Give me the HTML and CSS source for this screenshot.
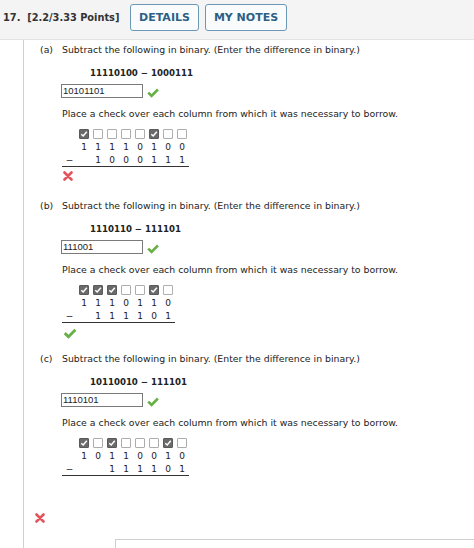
FILE: index.html
```html
<!DOCTYPE html>
<html>
<head>
<meta charset="utf-8">
<link rel="stylesheet" href="styles.css">
</head>
<body>
<div class="header">
  <span class="title">17. &nbsp;[2.2/3.33 Points]</span>
  <span class="btn btn-details">DETAILS</span>
  <span class="btn btn-notes">MY NOTES</span>
</div>
<div class="content">
  <div class="part part-a">
    <div class="qline"><span class="lbl">(a)</span><span>Subtract the following in binary. (Enter the difference in binary.)</span></div>
    <div class="expr">11110100 − 1000111</div>
    <div class="answer"><span class="input">10101101</span><svg class="ok" width="12" height="10" viewBox="0 0 12 10"><path d="M0.3 5.6 L2.2 3.7 L4.6 6.1 L10 0.6 L11.8 2.4 L4.6 9.7 Z" fill="#67b046"/></svg></div>
    <div class="place">Place a check over each column from which it was necessary to borrow.</div>
    <div class="sub cols8">
      <span></span>
      <span class="cb on"></span><span class="cb"></span><span class="cb"></span><span class="cb"></span><span class="cb"></span><span class="cb on"></span><span class="cb"></span><span class="cb"></span>
      <span></span>
      <span class="d">1</span><span class="d">1</span><span class="d">1</span><span class="d">1</span><span class="d">0</span><span class="d">1</span><span class="d">0</span><span class="d">0</span>
      <span class="d m">−</span>
      <span class="d m"></span><span class="d m">1</span><span class="d m">0</span><span class="d m">0</span><span class="d m">0</span><span class="d m">1</span><span class="d m">1</span><span class="d m">1</span>
    </div>
    <div class="mark"><svg class="x" width="10" height="10" viewBox="0 0 10 10"><path d="M1.5 1.5 L8.5 8.5 M8.5 1.5 L1.5 8.5" stroke="#e4545c" stroke-width="2.6" stroke-linecap="round"/></svg></div>
  </div>

  <div class="part part-b">
    <div class="qline"><span class="lbl">(b)</span><span>Subtract the following in binary. (Enter the difference in binary.)</span></div>
    <div class="expr">1110110 − 111101</div>
    <div class="answer"><span class="input">111001</span><svg class="ok" width="12" height="10" viewBox="0 0 12 10"><path d="M0.3 5.6 L2.2 3.7 L4.6 6.1 L10 0.6 L11.8 2.4 L4.6 9.7 Z" fill="#67b046"/></svg></div>
    <div class="place">Place a check over each column from which it was necessary to borrow.</div>
    <div class="sub cols7">
      <span></span>
      <span class="cb on"></span><span class="cb on"></span><span class="cb on"></span><span class="cb"></span><span class="cb"></span><span class="cb on"></span><span class="cb"></span>
      <span></span>
      <span class="d">1</span><span class="d">1</span><span class="d">1</span><span class="d">0</span><span class="d">1</span><span class="d">1</span><span class="d">0</span>
      <span class="d m">−</span>
      <span class="d m"></span><span class="d m">1</span><span class="d m">1</span><span class="d m">1</span><span class="d m">1</span><span class="d m">0</span><span class="d m">1</span>
    </div>
    <div class="mark"><svg class="okbig" width="14" height="11" viewBox="0 0 12 10"><path d="M0.3 5.6 L2.2 3.7 L4.6 6.1 L10 0.6 L11.8 2.4 L4.6 9.7 Z" fill="#67b046"/></svg></div>
  </div>

  <div class="part part-c">
    <div class="qline"><span class="lbl">(c)</span><span>Subtract the following in binary. (Enter the difference in binary.)</span></div>
    <div class="expr">10110010 − 111101</div>
    <div class="answer"><span class="input">1110101</span><svg class="ok" width="12" height="10" viewBox="0 0 12 10"><path d="M0.3 5.6 L2.2 3.7 L4.6 6.1 L10 0.6 L11.8 2.4 L4.6 9.7 Z" fill="#67b046"/></svg></div>
    <div class="place">Place a check over each column from which it was necessary to borrow.</div>
    <div class="sub cols8">
      <span></span>
      <span class="cb on"></span><span class="cb"></span><span class="cb on"></span><span class="cb"></span><span class="cb"></span><span class="cb"></span><span class="cb on"></span><span class="cb"></span>
      <span></span>
      <span class="d">1</span><span class="d">0</span><span class="d">1</span><span class="d">1</span><span class="d">0</span><span class="d">0</span><span class="d">1</span><span class="d">0</span>
      <span class="d m">−</span>
      <span class="d m"></span><span class="d m"></span><span class="d m">1</span><span class="d m">1</span><span class="d m">1</span><span class="d m">1</span><span class="d m">0</span><span class="d m">1</span>
    </div>
  </div>
  <div class="overall"><svg class="x" width="10" height="10" viewBox="0 0 10 10"><path d="M1.5 1.5 L8.5 8.5 M8.5 1.5 L1.5 8.5" stroke="#e4545c" stroke-width="2.6" stroke-linecap="round"/></svg></div>
  <div class="bottombox"></div>
</div>
</body>
</html>
```
FILE: styles.css
```css
html, body {
  margin: 0;
  padding: 0;
  background: #fff;
  overflow: hidden;
}
body {
  font-family: "DejaVu Sans", Verdana, sans-serif;
  font-size: 9.35px;
  color: #222;
}
.header {
  height: 39px;
  background: #f4f4f4;
  border-bottom: 1px solid #e4e4e4;
  display: flex;
  align-items: flex-start;
  padding-left: 3px;
}
.title {
  font-weight: bold;
  font-size: 9.8px;
  color: #333;
  margin-top: 12px;
  width: 127px;
}
.btn {
  margin-top: 4px;
  box-sizing: border-box;
  height: 27px;
  border: 1px solid #6c98b6;
  border-radius: 3px;
  background: #f9fbfc;
  color: #2d5f86;
  font-weight: bold;
  font-size: 11px;
  display: flex;
  align-items: center;
  justify-content: center;
}
.btn-details { width: 69px; }
.btn-notes { width: 82px; margin-left: 6px; }

.content {
  margin-left: 23px;
  border-left: 1px solid #d0d0d0;
  padding-left: 38px;
  padding-top: 4px;
  height: 508px;
  box-sizing: border-box;
}
.qline {
  display: flex;
  margin-left: -22px;
  height: 12px;
  line-height: 12px;
  white-space: nowrap;
}
.lbl { width: 22px; }
.part-b .qline { margin-top: 17px; }
.part-c .qline { margin-top: 14px; }
.expr {
  font-weight: bold;
  font-size: 8.6px;
  margin-left: 28px;
  margin-top: 11px;
  height: 12px;
  line-height: 12px;
}
.answer {
  display: flex;
  align-items: center;
  margin-top: 5px;
  margin-left: -1px;
  height: 14px;
}
.input {
  box-sizing: border-box;
  width: 82px;
  height: 14px;
  border: 1px solid #7a7a7a;
  font-family: "Liberation Sans", Arial, sans-serif;
  font-size: 9.5px;
  line-height: 12px;
  padding-left: 1px;
  color: #222;
}
.ok { margin-left: 4px; margin-top: 3px; }
.place {
  margin-top: 10px;
  height: 12px;
  line-height: 12px;
  white-space: nowrap;
}
.sub {
  display: grid;
  margin-top: 9px;
  width: max-content;
  align-items: start;
}
.cols8 { grid-template-columns: 15px repeat(8, 14px); }
.cols7 { grid-template-columns: 15px repeat(7, 14px); }
.cb {
  box-sizing: border-box;
  width: 10px;
  height: 10px;
  margin-left: 2px;
  border: 1px solid #adadad;
  border-radius: 1px;
  background: #fff;
  margin-bottom: 2px;
}
.cb.on {
  background: #6a6a6a url("data:image/svg+xml,%3Csvg xmlns='http://www.w3.org/2000/svg' viewBox='0 0 10 10'%3E%3Cpath d='M2.3 5.2 L4.2 7 L7.8 2.8' fill='none' stroke='white' stroke-width='1.5'/%3E%3C/svg%3E") center/10px 10px no-repeat;
  border-color: #5a5a5a;
}
.d {
  text-align: center;
  font-size: 9px;
  height: 13px;
  line-height: 13px;
}
.d.m {
  border-bottom: 1.5px solid #333;
  height: 12px;
  line-height: 12px;
}
.mark {
  display: flex;
  align-items: center;
  padding-top: 2px;
  padding-left: 1px;
  box-sizing: border-box;
  height: 16px;
}
.part-b .mark { padding-top: 4px; }
.x { display: block; }
.overall {
  margin-left: -27px;
  margin-top: 37px;
  height: 10px;
}
.bottombox {
  margin-left: 53px;
  margin-top: 16px;
  height: 20px;
  border-top: 1px solid #cfcfcf;
  border-left: 1px solid #cfcfcf;
}
```
